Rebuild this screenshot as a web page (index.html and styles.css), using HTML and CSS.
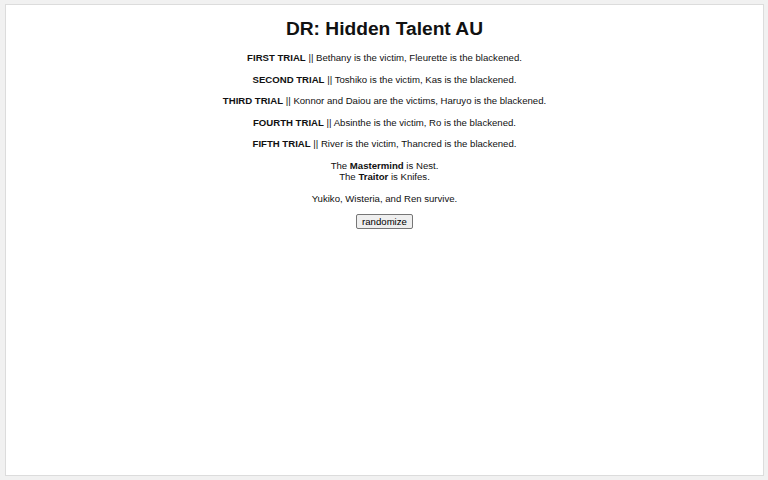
FILE: index.html
```html
<!DOCTYPE html>
<html>
<head>
<meta charset="utf-8">
<title>DR: Hidden Talent AU</title>
<link rel="stylesheet" href="styles.css">
</head>
<body>
<main class="sheet">
  <h1 class="title">DR: Hidden Talent AU</h1>
  <p><b>FIRST TRIAL</b> || Bethany is the victim, Fleurette is the blackened.</p>
  <p><b>SECOND TRIAL</b> || Toshiko is the victim, Kas is the blackened.</p>
  <p><b>THIRD TRIAL</b> || Konnor and Daiou are the victims, Haruyo is the blackened.</p>
  <p><b>FOURTH TRIAL</b> || Absinthe is the victim, Ro is the blackened.</p>
  <p><b>FIFTH TRIAL</b> || River is the victim, Thancred is the blackened.</p>
  <p>The <b>Mastermind</b> is Nest.<br>The <b>Traitor</b> is Knifes.</p>
  <p>Yukiko, Wisteria, and Ren survive.</p>
  <button class="roll" type="button">randomize</button>
</main>
</body>
</html>
```

FILE: styles.css
```css
html, body {
  margin: 0;
  height: 100%;
}

body {
  background: #f1f1f1;
  padding: 4px 4px 4px 5px;
  box-sizing: border-box;
  font-family: "Liberation Sans", Arial, sans-serif;
  color: #111;
}

.sheet {
  box-sizing: border-box;
  height: 100%;
  background: #fff;
  border: 1px solid #dcdcdc;
  text-align: center;
  padding-top: 12px;
  font-size: 9.6px;
}

.title {
  font-size: 19.2px;
  line-height: 23px;
  margin: 0 0 12px;
  font-weight: bold;
}

.sheet p {
  margin: 10px 0;
  line-height: 11.5px;
}

.roll {
  font-family: "Liberation Sans", Arial, sans-serif;
  font-size: 9.6px;
  color: #000;
  background: #efefef;
  border: 1px solid #767676;
  border-radius: 2px;
  padding: 1px 5px;
  line-height: 11px;
}
```
